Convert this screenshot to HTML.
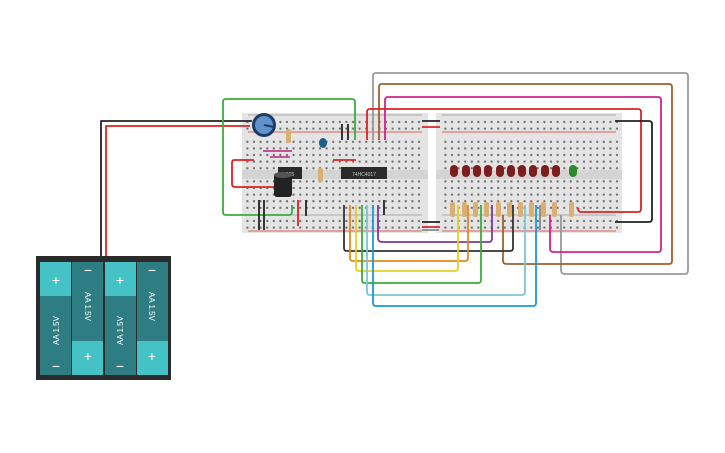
<!DOCTYPE html>
<html><head><meta charset="utf-8"><style>html,body{margin:0;padding:0;background:#fff}svg{display:block}</style></head>
<body>
<svg width="725" height="453" viewBox="0 0 725 453" xmlns="http://www.w3.org/2000/svg" font-family="Liberation Sans, sans-serif">
<defs>
<pattern id="h" x="0" y="0" width="6.6" height="6.6" patternUnits="userSpaceOnUse"><rect x="2.2" y="2.2" width="2" height="2" fill="#6a6a6a"/></pattern>
</defs>
<g>
<rect x="242" y="113" width="186" height="120" fill="#e4e4e4"/>
<rect x="246" y="117" width="178" height="14" fill="url(#h)"/>
<rect x="246" y="137" width="178" height="33" fill="url(#h)"/>
<rect x="242" y="170" width="186" height="9" fill="#d4d4d4"/>
<rect x="246" y="180" width="178" height="33" fill="url(#h)"/>
<rect x="246" y="216" width="178" height="14" fill="url(#h)"/>
<line x1="248" y1="115" x2="422" y2="115" stroke="#aaa"/><line x1="248" y1="132" x2="422" y2="132" stroke="#e06060"/>
<line x1="248" y1="215" x2="422" y2="215" stroke="#aaa"/><line x1="248" y1="231" x2="422" y2="231" stroke="#e06060"/>
</g>
<g>
<rect x="436" y="113" width="186" height="120" fill="#e4e4e4"/>
<rect x="440" y="117" width="178" height="14" fill="url(#h)"/>
<rect x="440" y="137" width="178" height="33" fill="url(#h)"/>
<rect x="436" y="170" width="186" height="9" fill="#d4d4d4"/>
<rect x="440" y="180" width="178" height="33" fill="url(#h)"/>
<rect x="440" y="216" width="178" height="14" fill="url(#h)"/>
<line x1="442" y1="115" x2="616" y2="115" stroke="#aaa"/><line x1="442" y1="132" x2="616" y2="132" stroke="#e06060"/>
<line x1="442" y1="215" x2="616" y2="215" stroke="#aaa"/><line x1="442" y1="231" x2="616" y2="231" stroke="#e06060"/>
</g>
<g fill="none" stroke-width="1.8" stroke-linejoin="round">
<path d="M101 257 V121 H252" stroke="#222"/>
<path d="M106 257 V126 H250" stroke="#d22"/>
<path d="M561 215 V270 Q561 274 565 274 H685 Q688 274 688 270 V76 Q688 73 685 73 H376 Q373 73 373 76 V140" stroke="#999"/>
<path d="M503 215 V261 Q503 264 507 264 H669 Q672 264 672 261 V87 Q672 84 669 84 H382 Q379 84 379 87 V140" stroke="#a0622d"/>
<path d="M550 215 V249 Q550 252 554 252 H658 Q661 252 661 249 V100 Q661 97 658 97 H388 Q385 97 385 100 V140" stroke="#d3208f"/>
<path d="M367 140 V112 Q367 109 370 109 H638 Q641 109 641 112 V209 Q641 212 638 212 H581 Q578 212 578 208" stroke="#d22"/>
<path d="M615 121 H649 Q652 121 652 124 V219 Q652 222 649 222 H615" stroke="#222"/>
<path d="M422 121 H440 M422 222 H440" stroke="#222"/>
<path d="M422 127 H440 M422 227 H440" stroke="#d22"/>
<path d="M355 140 V102 Q355 99 352 99 H226 Q223 99 223 102 V212 Q223 215 226 215 H289 Q292 215 292 212 V205" stroke="#3aad3a"/>
<path d="M254 160 H234 Q232 160 232 163 V184 Q232 187 235 187 H276" stroke="#d22"/>
<path d="M348 140 V124 M342 140 V124" stroke="#222"/>
<path d="M333 160 H356" stroke="#d22"/>
<path d="M270 157 H290 M263 151 H292" stroke="#c23c8f"/>
<path d="M378 205 V238 Q378 242 382 242 H489 Q492 242 492 238 V205" stroke="#7b3a9c"/>
<path d="M344 205 V248 Q344 251 347 251 H510 Q513 251 513 248 V205" stroke="#333"/>
<path d="M350 205 V258 Q350 261 353 261 H465 Q468 261 468 258 V205" stroke="#e08a1e"/>
<path d="M356 205 V268 Q356 271 359 271 H455 Q458 271 458 268 V205" stroke="#e8cf1e"/>
<path d="M362 205 V280 Q362 283 365 283 H478 Q481 283 481 280 V205" stroke="#3aad3a"/>
<path d="M367 205 V292 Q367 295 370 295 H522 Q525 295 525 292 V205" stroke="#79c7d4"/>
<path d="M373 205 V303 Q373 306 376 306 H533 Q536 306 536 303 V205" stroke="#1a9ad6"/>
<path d="M384 200 V215 M306 200 V216 M259 200 V230 M264 200 V230" stroke="#222"/>
<path d="M298 200 V226" stroke="#d22"/>
<path d="M540 205 V230 M439 230 H422" stroke="#888"/>
</g>
<rect x="278" y="167" width="24" height="12" fill="#2a2a2a"/>
<text x="290" y="176" font-size="5" fill="#ccc" text-anchor="middle">555</text>
<rect x="341" y="167" width="46" height="12" fill="#2a2a2a"/>
<text x="364" y="176" font-size="5" fill="#ccc" text-anchor="middle">74HC4017</text>
<rect x="274" y="173" width="18" height="24" rx="3" fill="#222"/>
<ellipse cx="283" cy="175" rx="9" ry="3" fill="#555"/>
<circle cx="264" cy="125" r="12" fill="#1e3d66"/>
<circle cx="264" cy="125" r="9" fill="#5f93c9"/>
<line x1="264" y1="125" x2="274" y2="127" stroke="#1e3d66" stroke-width="2"/>
<ellipse cx="323" cy="143" rx="4" ry="5" fill="#1d5f8a"/>
<rect x="286" y="129" width="5" height="14" rx="2" fill="#d9b072"/>
<rect x="318" y="168" width="5" height="14" rx="2" fill="#d9b072"/>
<g fill="#7d1e1e">
<rect x="450" y="165" width="8" height="12" rx="4"/><rect x="462" y="165" width="8" height="12" rx="4"/><rect x="473" y="165" width="8" height="12" rx="4"/><rect x="484" y="165" width="8" height="12" rx="4"/><rect x="496" y="165" width="8" height="12" rx="4"/><rect x="507" y="165" width="8" height="12" rx="4"/><rect x="518" y="165" width="8" height="12" rx="4"/><rect x="529" y="165" width="8" height="12" rx="4"/><rect x="541" y="165" width="8" height="12" rx="4"/><rect x="552" y="165" width="8" height="12" rx="4"/>
</g>
<rect x="569" y="165" width="8" height="12" rx="4" fill="#2a8a2a"/>
<g fill="#d9b072">
<rect x="450" y="202" width="5" height="15" rx="2"/><rect x="462" y="202" width="5" height="15" rx="2"/><rect x="473" y="202" width="5" height="15" rx="2"/><rect x="484" y="202" width="5" height="15" rx="2"/><rect x="496" y="202" width="5" height="15" rx="2"/><rect x="507" y="202" width="5" height="15" rx="2"/><rect x="518" y="202" width="5" height="15" rx="2"/><rect x="529" y="202" width="5" height="15" rx="2"/><rect x="541" y="202" width="5" height="15" rx="2"/><rect x="552" y="202" width="5" height="15" rx="2"/><rect x="569" y="202" width="5" height="15" rx="2"/>
</g>
<rect x="36" y="256" width="135" height="124" fill="#2b2b2b"/>
<g>
<rect x="40" y="262" width="31" height="113" fill="#2d7d83"/><rect x="40" y="262" width="31" height="34" fill="#44c2c6"/>
<rect x="72" y="262" width="31" height="113" fill="#2d7d83"/><rect x="72" y="341" width="31" height="34" fill="#44c2c6"/>
<rect x="105" y="262" width="31" height="113" fill="#2d7d83"/><rect x="105" y="262" width="31" height="34" fill="#44c2c6"/>
<rect x="137" y="262" width="31" height="113" fill="#2d7d83"/><rect x="137" y="341" width="31" height="34" fill="#44c2c6"/>
</g>
<g fill="#fff" font-size="14" text-anchor="middle">
<text x="56" y="285">+</text><text x="56" y="371">−</text>
<text x="88" y="275">−</text><text x="88" y="361">+</text>
<text x="120" y="285">+</text><text x="120" y="371">−</text>
<text x="152" y="275">−</text><text x="152" y="361">+</text>
</g>
<g fill="#fff" font-size="8">
<text transform="translate(59,345) rotate(-90)">AA 1.5V</text>
<text transform="translate(85,292) rotate(90)">AA 1.5V</text>
<text transform="translate(123,345) rotate(-90)">AA 1.5V</text>
<text transform="translate(149,292) rotate(90)">AA 1.5V</text>
</g>
</svg>
</body></html>
